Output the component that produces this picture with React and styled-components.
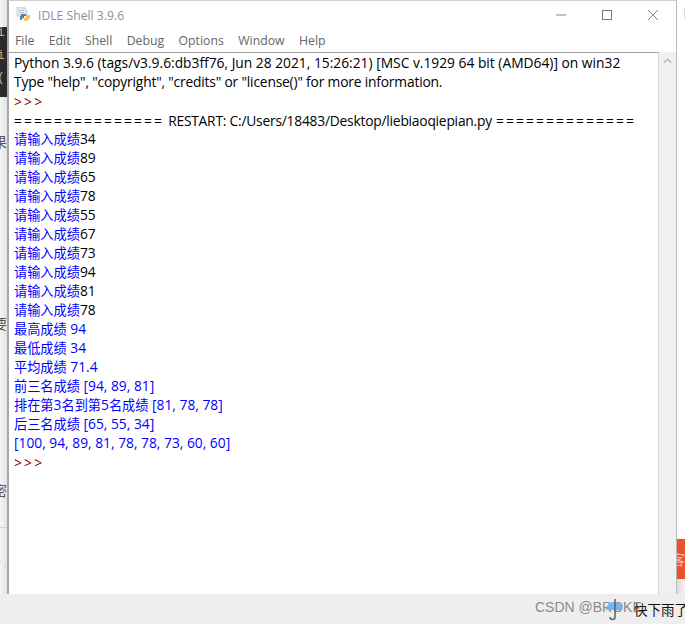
import React from "react";
import styled, { createGlobalStyle } from "styled-components";

const GlobalStyle = createGlobalStyle`
  html, body {
    margin: 0;
    padding: 0;
    background: #fff;
  }
`;

const OUTPUT = [
  { text: "Python 3.9.6 (tags/v3.9.6:db3ff76, Jun 28 2021, 15:26:21) [MSC v.1929 64 bit (AMD64)] on win32" },
  { text: 'Type "help", "copyright", "credits" or "license()" for more information.', tight: true },
  { prompt: true },
  { restart: "RESTART: C:/Users/18483/Desktop/liebiaoqiepian.py" },
  { ask: "请输入成绩", value: "34" },
  { ask: "请输入成绩", value: "89" },
  { ask: "请输入成绩", value: "65" },
  { ask: "请输入成绩", value: "78" },
  { ask: "请输入成绩", value: "55" },
  { ask: "请输入成绩", value: "67" },
  { ask: "请输入成绩", value: "73" },
  { ask: "请输入成绩", value: "94" },
  { ask: "请输入成绩", value: "81" },
  { ask: "请输入成绩", value: "78" },
  { ask: "最高成绩 94" },
  { ask: "最低成绩 34" },
  { ask: "平均成绩 71.4" },
  { ask: "前三名成绩 [94, 89, 81]" },
  { ask: "排在第3名到第5名成绩 [81, 78, 78]" },
  { ask: "后三名成绩 [65, 55, 34]" },
  { ask: "[100, 94, 89, 81, 78, 78, 73, 60, 60]" },
  { prompt: true },
];

const MENU = ["File", "Edit", "Shell", "Debug", "Options", "Window", "Help"];

// the chinese runs are narrower than the latin ones in the original font
const splitCjk = (str) =>
  str.split(/([\u4e00-\u9fff]+)/).map((part, i) =>
    /[\u4e00-\u9fff]/.test(part) ? <Cjk key={i}>{part}</Cjk> : part
  );

const App = () => {
  return (
    <Page>
      <GlobalStyle />
      <Desktop>
        <LeftEdge>
          <CodeBlock>
            <CodeGlyph>i</CodeGlyph>
            <CodeGlyph>i</CodeGlyph>
            <CodeGlyph $light>(</CodeGlyph>
          </CodeBlock>
          <PageGlyph $gap={36}>果</PageGlyph>
          <PageGlyph $gap={166}>要</PageGlyph>
          <PageGlyph $gap={151}>密</PageGlyph>
          <Rule />
          <PageGlyph $gap={23}>5</PageGlyph>
        </LeftEdge>
        <Window>
          <TitleBar>
            <PythonIcon />
            <Title>IDLE Shell 3.9.6</Title>
            <WindowButtons>
              <Minimize />
              <Maximize />
              <Close />
            </WindowButtons>
          </TitleBar>
          <MenuBar>
            {MENU.map((item) => (
              <MenuItem key={item}>{item}</MenuItem>
            ))}
          </MenuBar>
          <Body>
            <Shell>
              {OUTPUT.map((line, i) => (
                <Line key={i} $tight={line.tight} $low={line.prompt || line.restart}>
                  {line.prompt && <Prompt>&gt;&gt;&gt;</Prompt>}
                  {line.text}
                  {line.restart && (
                    <>
                      <Equals>===============</Equals>
                      <Restart>{line.restart}</Restart>
                      <Equals>==============</Equals>
                    </>
                  )}
                  {line.ask && <Blue>{splitCjk(line.ask)}</Blue>}
                  {line.value}
                </Line>
              ))}
            </Shell>
            <ScrollBar>
              <ScrollArrow />
            </ScrollBar>
          </Body>
        </Window>
        <RightEdge>
          <Tag />
          <OrangeTab>客</OrangeTab>
          <RightFill />
        </RightEdge>
      </Desktop>
      <BottomBar>
        <Watermark>CSDN @BROKE</Watermark>
        <Umbrella />
        <Caption>快下雨了</Caption>
      </BottomBar>
    </Page>
  );
};

const PythonIcon = () => (
  <IconSvg viewBox="0 0 16 16">
    <path d="M1 0h7l3 3v6H1z" fill="#e4e7ec" stroke="#b4b8c0" strokeWidth="0.6" />
    <path d="M3 3h5v1H3zM3 5h5v1H3z" fill="#c2c7d0" />
    <path d="M5 7h5v2H8v2H6v2H4v-4h1z" fill="#4f7fb0" />
    <path d="M10 8h4v4h-2v2H8v-2H7v-1h3z" fill="#f2c84b" />
  </IconSvg>
);

const Minimize = () => (
  <ButtonSvg viewBox="0 0 12 12">
    <path d="M1 6h10" stroke="#8a8a8a" strokeWidth="1" />
  </ButtonSvg>
);

const Maximize = () => (
  <ButtonSvg viewBox="0 0 12 12">
    <rect x="1.5" y="1.5" width="9" height="9" fill="none" stroke="#777" strokeWidth="1" />
  </ButtonSvg>
);

const Close = () => (
  <ButtonSvg viewBox="0 0 12 12">
    <path d="M1 1l10 10M11 1L1 11" stroke="#8a8a8a" strokeWidth="1" />
  </ButtonSvg>
);

const ScrollArrow = () => (
  <ArrowSvg viewBox="0 0 10 6">
    <path d="M1 5l4-4 4 4" fill="none" stroke="#b4b4b4" strokeWidth="1.6" />
  </ArrowSvg>
);

const Umbrella = () => (
  <UmbrellaSvg viewBox="0 0 20 24">
    <path d="M2 12a8 8 0 0 1 16 0z" fill="#6fb4f0" />
    <path d="M11 1v18a2.5 2.5 0 0 1-5 0" fill="none" stroke="#666" strokeWidth="1.6" />
  </UmbrellaSvg>
);

const Page = styled.div`
  width: 685px;
  height: 624px;
  overflow: hidden;
  display: flex;
  flex-direction: column;
  font-family: "Open Sans", "Noto Sans CJK SC", sans-serif;
`;

const Desktop = styled.div`
  display: flex;
  height: 594px;
`;

const LeftEdge = styled.div`
  width: 7px;
  flex-shrink: 0;
  display: flex;
  flex-direction: column;
  background: linear-gradient(to right, #f6f6f6, #e2e2e2);
  overflow: hidden;
`;

const CodeBlock = styled.div`
  margin-top: 27px;
  height: 70px;
  flex-shrink: 0;
  background: #2b2b2b;
  display: flex;
  flex-direction: column;
  overflow: hidden;
`;

const CodeGlyph = styled.span`
  font-family: "Liberation Mono", monospace;
  font-size: 13px;
  line-height: 22.5px;
  color: ${(p) => (p.$light ? "#9fb4c4" : "#d9a566")};
  margin-left: -3px;

  &:first-child {
    margin-top: -5px;
  }
`;

const PageGlyph = styled.span`
  margin-top: ${(p) => p.$gap}px;
  margin-left: -7px;
  font-family: "Noto Sans CJK SC", sans-serif;
  font-size: 14px;
  line-height: 16px;
  color: #555;
  white-space: nowrap;
`;

const Rule = styled.div`
  margin-top: 29px;
  height: 1px;
  flex-shrink: 0;
  background: #d4d4d4;
`;

const Window = styled.div`
  width: 670px;
  flex-shrink: 0;
  box-sizing: border-box;
  display: flex;
  flex-direction: column;
  background: #fff;
  border-left: 2px solid #a8a8a8;
  border-top: 1px solid #cfcfcf;
  border-right: 1px solid #b8b8b8;
`;

const TitleBar = styled.div`
  height: 30px;
  box-sizing: border-box;
  display: flex;
  align-items: center;
  padding: 0 0 2px 7px;
`;

const IconSvg = styled.svg`
  width: 16px;
  height: 16px;
  flex-shrink: 0;
`;

const Title = styled.span`
  margin-left: 6px;
  font-size: 12.2px;
  color: #8f8f8f;
`;

const WindowButtons = styled.div`
  margin-left: auto;
  margin-right: 17px;
  display: flex;
  align-items: center;
  gap: 34px;
`;

const ButtonSvg = styled.svg`
  width: 12px;
  height: 12px;
`;

const MenuBar = styled.div`
  height: 21px;
  box-sizing: border-box;
  display: flex;
  align-items: center;
  padding: 0 0 2px 6px;
  gap: 14.3px;
`;

const MenuItem = styled.span`
  font-size: 12.3px;
  color: #666;
`;

const Body = styled.div`
  flex: 1;
  display: flex;
  min-height: 0;
`;

const Shell = styled.div`
  flex: 1;
  padding: 0 0 0 5px;
  border-top: 1px solid #a0a0a0;
  border-right: 1px solid #d8d8d8;
  overflow: hidden;
`;

const Line = styled.div`
  height: 19px;
  font-size: 13.8px;
  line-height: ${(p) => (p.$low ? "21px" : "19px")};
  letter-spacing: ${(p) => (p.$tight ? "-0.18px" : "0")};
  color: #000;
  white-space: nowrap;
`;

const Blue = styled.span`
  color: #0000ff;
`;

const Cjk = styled.span`
  font-size: 13.2px;
`;

const Prompt = styled.span`
  color: #8b0000;
  letter-spacing: 2.2px;
`;

const Equals = styled.span`
  letter-spacing: 2.12px;
`;

const Restart = styled.span`
  margin: 0 4px;
  letter-spacing: -0.22px;
`;

const ScrollBar = styled.div`
  width: 17px;
  flex-shrink: 0;
  background: #f0f0f0;
  display: flex;
  justify-content: center;
  padding-top: 6px;
  box-sizing: border-box;
`;

const ArrowSvg = styled.svg`
  width: 9px;
  height: 6px;
`;

const RightEdge = styled.div`
  flex: 1;
  display: flex;
  flex-direction: column;
  background: #fff;
  overflow: hidden;
`;

const Tag = styled.div`
  margin-top: 8px;
  height: 11px;
  width: 1px;
  flex-shrink: 0;
  align-self: flex-end;
  background: #e8d9b8;
`;

const OrangeTab = styled.div`
  margin-top: 520px;
  height: 40px;
  flex-shrink: 0;
  background: #e8532b;
  color: #f5c0ae;
  font-family: "Noto Sans CJK SC", sans-serif;
  font-size: 14px;
  line-height: 40px;
  text-indent: -6px;
  white-space: nowrap;
`;

const RightFill = styled.div`
  flex: 1;
  background: linear-gradient(to right, #dcdcdc, #f2f2f2);
`;

const BottomBar = styled.div`
  position: relative;
  height: 30px;
  box-sizing: border-box;
  background: #eeeeee;
  display: flex;
  align-items: center;
  padding: 0 0 4px 535px;
`;

const Watermark = styled.span`
  font-family: "Liberation Sans", sans-serif;
  font-size: 14px;
  color: #8a8a8a;
`;

const UmbrellaSvg = styled.svg`
  position: absolute;
  left: 604px;
  top: 4px;
  width: 20px;
  height: 24px;
`;

const Caption = styled.span`
  position: absolute;
  left: 634px;
  top: 5px;
  font-family: "Noto Sans CJK SC", sans-serif;
  font-size: 13.5px;
  color: #111;
  white-space: nowrap;
`;

export default App;
